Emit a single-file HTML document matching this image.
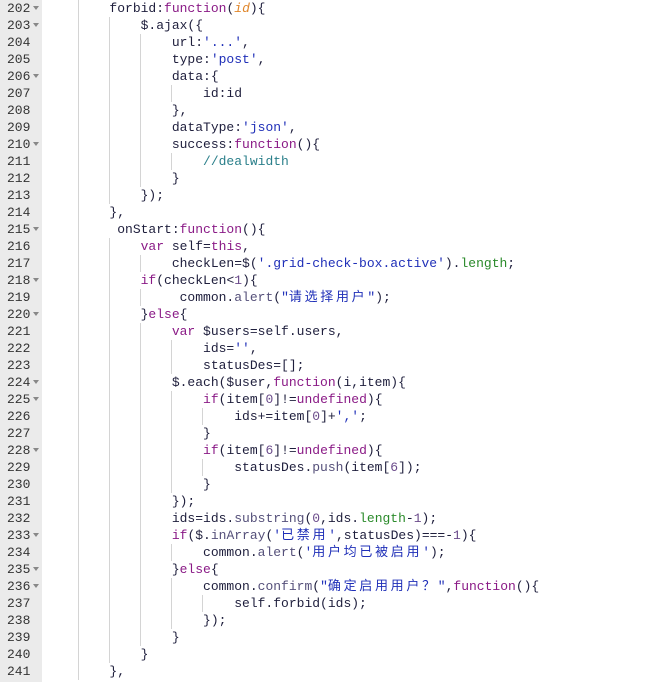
<!DOCTYPE html>
<html><head><meta charset="utf-8"><style>
body{margin:0;width:663px;height:682px;overflow:hidden;background:#fff;position:relative}
#g{position:absolute;left:0;top:0;width:42px;height:682px;background:#ebebeb}
.l{position:absolute;left:0;height:17px;width:663px;font:13px/17px "Liberation Mono","Noto Sans CJK SC",monospace;color:#1e1e3c;white-space:pre}
.n{position:absolute;left:7px;top:0;color:#333}
.a{position:absolute;left:33px;top:6px;width:0;height:0;border-left:3px solid transparent;border-right:3px solid transparent;border-top:4px solid #888}
.c{position:absolute;left:47px;top:0}
.gd{position:absolute;left:78px;top:0;height:17px;background:repeating-linear-gradient(to right,#d4d4d4 0 1px,transparent 1px 31px)}
.k{color:#8a1a86}.s{color:#1f2fb8}.m{color:#55507a}.g{color:#2a8a2a}.p{color:#e0862a;font-style:italic}.cm{color:#2a7f8a}.z{color:#6a4a8a}
.h{letter-spacing:2.7px}
</style></head><body>
<div id="g"></div>
<div class="l" style="top:0"><span class="n">202</span><span class="a"></span><span class="gd" style="width:1px"></span><span class="c">        forbid:<span class="k">function</span>(<span class="p">id</span>){</span></div>
<div class="l" style="top:17px"><span class="n">203</span><span class="a"></span><span class="gd" style="width:32px"></span><span class="c">            $.ajax({</span></div>
<div class="l" style="top:34px"><span class="n">204</span><span class="gd" style="width:63px"></span><span class="c">                url:<span class="s">'...'</span>,</span></div>
<div class="l" style="top:51px"><span class="n">205</span><span class="gd" style="width:63px"></span><span class="c">                type:<span class="s">'post'</span>,</span></div>
<div class="l" style="top:68px"><span class="n">206</span><span class="a"></span><span class="gd" style="width:63px"></span><span class="c">                data:{</span></div>
<div class="l" style="top:85px"><span class="n">207</span><span class="gd" style="width:94px"></span><span class="c">                    id:id</span></div>
<div class="l" style="top:102px"><span class="n">208</span><span class="gd" style="width:63px"></span><span class="c">                },</span></div>
<div class="l" style="top:119px"><span class="n">209</span><span class="gd" style="width:63px"></span><span class="c">                dataType:<span class="s">'json'</span>,</span></div>
<div class="l" style="top:136px"><span class="n">210</span><span class="a"></span><span class="gd" style="width:63px"></span><span class="c">                success:<span class="k">function</span>(){</span></div>
<div class="l" style="top:153px"><span class="n">211</span><span class="gd" style="width:94px"></span><span class="c">                    <span class="cm">//dealwidth</span></span></div>
<div class="l" style="top:170px"><span class="n">212</span><span class="gd" style="width:63px"></span><span class="c">                }</span></div>
<div class="l" style="top:187px"><span class="n">213</span><span class="gd" style="width:32px"></span><span class="c">            });</span></div>
<div class="l" style="top:204px"><span class="n">214</span><span class="gd" style="width:1px"></span><span class="c">        },</span></div>
<div class="l" style="top:221px"><span class="n">215</span><span class="a"></span><span class="gd" style="width:1px"></span><span class="c">         onStart:<span class="k">function</span>(){</span></div>
<div class="l" style="top:238px"><span class="n">216</span><span class="gd" style="width:32px"></span><span class="c">            <span class="k">var</span> self=<span class="k">this</span>,</span></div>
<div class="l" style="top:255px"><span class="n">217</span><span class="gd" style="width:63px"></span><span class="c">                checkLen=$(<span class="s">'.grid-check-box.active'</span>).<span class="g">length</span>;</span></div>
<div class="l" style="top:272px"><span class="n">218</span><span class="a"></span><span class="gd" style="width:32px"></span><span class="c">            <span class="k">if</span>(checkLen&lt;<span class="z">1</span>){</span></div>
<div class="l" style="top:289px"><span class="n">219</span><span class="gd" style="width:63px"></span><span class="c">                 common.<span class="m">alert</span>(<span class="s">"<span class="h">请选择用户</span>"</span>);</span></div>
<div class="l" style="top:306px"><span class="n">220</span><span class="a"></span><span class="gd" style="width:32px"></span><span class="c">            }<span class="k">else</span>{</span></div>
<div class="l" style="top:323px"><span class="n">221</span><span class="gd" style="width:63px"></span><span class="c">                <span class="k">var</span> $users=self.users,</span></div>
<div class="l" style="top:340px"><span class="n">222</span><span class="gd" style="width:94px"></span><span class="c">                    ids=<span class="s">''</span>,</span></div>
<div class="l" style="top:357px"><span class="n">223</span><span class="gd" style="width:94px"></span><span class="c">                    statusDes=[];</span></div>
<div class="l" style="top:374px"><span class="n">224</span><span class="a"></span><span class="gd" style="width:63px"></span><span class="c">                $.each($user,<span class="k">function</span>(i,item){</span></div>
<div class="l" style="top:391px"><span class="n">225</span><span class="a"></span><span class="gd" style="width:94px"></span><span class="c">                    <span class="k">if</span>(item[<span class="z">0</span>]!=<span class="k">undefined</span>){</span></div>
<div class="l" style="top:408px"><span class="n">226</span><span class="gd" style="width:125px"></span><span class="c">                        ids+=item[<span class="z">0</span>]+<span class="s">','</span>;</span></div>
<div class="l" style="top:425px"><span class="n">227</span><span class="gd" style="width:94px"></span><span class="c">                    }</span></div>
<div class="l" style="top:442px"><span class="n">228</span><span class="a"></span><span class="gd" style="width:94px"></span><span class="c">                    <span class="k">if</span>(item[<span class="z">6</span>]!=<span class="k">undefined</span>){</span></div>
<div class="l" style="top:459px"><span class="n">229</span><span class="gd" style="width:125px"></span><span class="c">                        statusDes.<span class="m">push</span>(item[<span class="z">6</span>]);</span></div>
<div class="l" style="top:476px"><span class="n">230</span><span class="gd" style="width:94px"></span><span class="c">                    }</span></div>
<div class="l" style="top:493px"><span class="n">231</span><span class="gd" style="width:63px"></span><span class="c">                });</span></div>
<div class="l" style="top:510px"><span class="n">232</span><span class="gd" style="width:63px"></span><span class="c">                ids=ids.<span class="m">substring</span>(<span class="z">0</span>,ids.<span class="g">length</span>-<span class="z">1</span>);</span></div>
<div class="l" style="top:527px"><span class="n">233</span><span class="a"></span><span class="gd" style="width:63px"></span><span class="c">                <span class="k">if</span>($.<span class="m">inArray</span>(<span class="s">'<span class="h">已禁用</span>'</span>,statusDes)===-<span class="z">1</span>){</span></div>
<div class="l" style="top:544px"><span class="n">234</span><span class="gd" style="width:94px"></span><span class="c">                    common.<span class="m">alert</span>(<span class="s">'<span class="h">用户均已被启用</span>'</span>);</span></div>
<div class="l" style="top:561px"><span class="n">235</span><span class="a"></span><span class="gd" style="width:63px"></span><span class="c">                }<span class="k">else</span>{</span></div>
<div class="l" style="top:578px"><span class="n">236</span><span class="a"></span><span class="gd" style="width:94px"></span><span class="c">                    common.<span class="m">confirm</span>(<span class="s">"<span class="h">确定启用用户？</span>"</span>,<span class="k">function</span>(){</span></div>
<div class="l" style="top:595px"><span class="n">237</span><span class="gd" style="width:125px"></span><span class="c">                        self.forbid(ids);</span></div>
<div class="l" style="top:612px"><span class="n">238</span><span class="gd" style="width:94px"></span><span class="c">                    });</span></div>
<div class="l" style="top:629px"><span class="n">239</span><span class="gd" style="width:63px"></span><span class="c">                }</span></div>
<div class="l" style="top:646px"><span class="n">240</span><span class="gd" style="width:32px"></span><span class="c">            }</span></div>
<div class="l" style="top:663px"><span class="n">241</span><span class="gd" style="width:1px"></span><span class="c">        },</span></div>
</body></html>
